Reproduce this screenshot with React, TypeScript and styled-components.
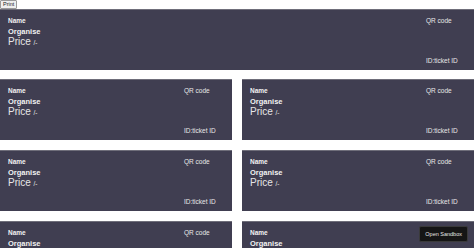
import styled, { createGlobalStyle } from 'styled-components';

const GlobalStyle = createGlobalStyle`
  body {
    margin: 0;
    background: #ffffff;
    font-family: "Liberation Sans", Arial, sans-serif;
    overflow: hidden;
  }
`;

const PrintButton = styled.button`
  display: block;
  height: 9px;
  padding: 0 2px;
  margin: 0;
  font-family: "Liberation Sans", Arial, sans-serif;
  font-size: 5.5px;
  line-height: 7px;
  color: #222;
  background: #efefef;
  border: 1px solid #9a9a9a;
  border-radius: 1px;
`;

const Sheet = styled.div`
  display: grid;
  grid-template-columns: 1fr 1fr;
  column-gap: 10px;
  row-gap: 10px;
  padding-top: 0;
`;

const Ticket = styled.div<{ wide?: boolean }>`
  grid-column: ${({ wide }) => (wide ? '1 / span 2' : 'auto')};
  margin-bottom: ${({ wide }) => (wide ? '-1px' : '0')};
  height: 61px;
  box-sizing: border-box;
  display: flex;
  justify-content: space-between;
  padding: 7px 12px 5px 8px;
  background: #403e51;
  border-top: 1px solid #6f6e7a;
  color: #f2f2f2;
`;

const Info = styled.div`
  display: flex;
  flex-direction: column;
`;

const Name = styled.div`
  font-size: 6.5px;
  font-weight: bold;
  line-height: 8px;
  margin-bottom: 3px;
`;

const Organise = styled.div`
  font-size: 7.5px;
  font-weight: bold;
  line-height: 8px;
`;

const Price = styled.div`
  font-size: 10px;
  line-height: 11px;
  color: #e6e6e6;

  span {
    font-size: 6.5px;
  }
`;

const Side = styled.div`
  width: 36px;
  display: flex;
  flex-direction: column;
  justify-content: space-between;
  font-size: 6.5px;
  line-height: 8px;
  color: #e8e8e8;
  padding-top: 0;
`;

const SandboxButton = styled.div`
  position: fixed;
  right: 6px;
  bottom: 6px;
  height: 14px;
  padding: 0 5px;
  display: flex;
  align-items: center;
  background: #151515;
  border: 1px solid #3a3a3a;
  border-radius: 2px;
  color: #e8e8e8;
  font-size: 5.5px;
`;

const TicketCard = ({ wide }: { wide?: boolean }) => (
  <Ticket wide={wide}>
    <Info>
      <Name>Name</Name>
      <Organise>Organise</Organise>
      <Price>
        Price <span>/-</span>
      </Price>
    </Info>
    <Side>
      <div>QR code</div>
      <div>ID:ticket ID</div>
    </Side>
  </Ticket>
);

export default function App() {
  return (
    <>
      <GlobalStyle />
      <PrintButton>Print</PrintButton>
      <Sheet>
        <TicketCard wide />
        <TicketCard />
        <TicketCard />
        <TicketCard />
        <TicketCard />
        <TicketCard />
        <TicketCard />
      </Sheet>
      <SandboxButton>Open Sandbox</SandboxButton>
    </>
  );
}
